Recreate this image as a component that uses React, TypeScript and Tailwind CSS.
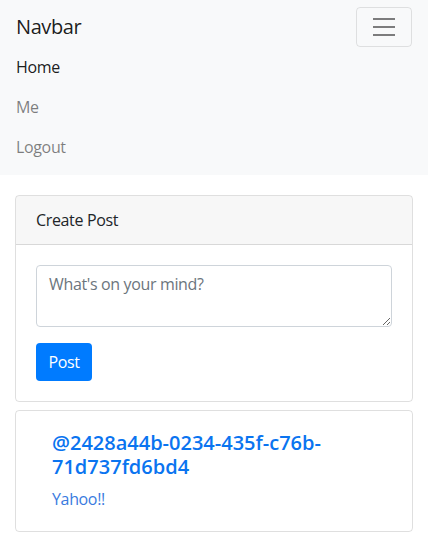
import React from "react";

export default function App() {
  return (
    <div className="min-h-[548px] bg-white text-[#212529] font-['Open_Sans',sans-serif] text-[16px] leading-[24px] tracking-[-0.35px]">
      <nav className="bg-[#f8f9fa] px-4 pt-[7px] pb-[8px]">
        <div className="flex items-center justify-between h-[40px]">
          <span className="text-[20px] leading-[30px] text-black/90 tracking-[-0.4px]">Navbar</span>
          <button className="w-[56px] h-[40px] border border-black/10 rounded-[4px] flex items-center justify-center">
            <svg width="30" height="30" viewBox="0 0 30 30">
              <path d="M4 7h22M4 15h22M4 23h22" stroke="rgba(0,0,0,0.5)" strokeWidth="2" strokeMiterlimit="10" />
            </svg>
          </button>
        </div>
        <ul className="flex flex-col">
          <li className="py-2 text-black/90">Home</li>
          <li className="py-2 text-black/50">Me</li>
          <li className="py-2 text-black/50">Logout</li>
        </ul>
      </nav>
      <div className="px-[15px] pt-[20px] flex flex-col gap-[8px]">
        <div className="border border-black/[0.125] rounded-[4px] overflow-hidden">
          <div className="bg-black/[0.03] border-b border-black/[0.125] px-5 py-3">Create Post</div>
          <div className="p-5">
            <textarea
              rows={2}
              placeholder="What's on your mind?"
              className="block w-full h-[62px] border border-[#ced4da] rounded-[4px] px-3 py-[6px] placeholder:text-[#6c757d] outline-none tracking-[-0.35px]"
            />
            <button className="mt-4 h-[38px] w-[56px] bg-[#007bff] text-white rounded-[4px]">Post</button>
          </div>
        </div>
        <div className="border border-black/[0.125] rounded-[4px] px-[36px] py-5">
          <h5 className="text-[20px] leading-[24px] font-semibold text-[#0a74f0] mb-2 break-words tracking-[0px]">
            @2428a44b-0234-435f-c76b-71d737fd6bd4
          </h5>
          <p className="text-[#3a7be0]">Yahoo!!</p>
        </div>
      </div>
    </div>
  );
}
